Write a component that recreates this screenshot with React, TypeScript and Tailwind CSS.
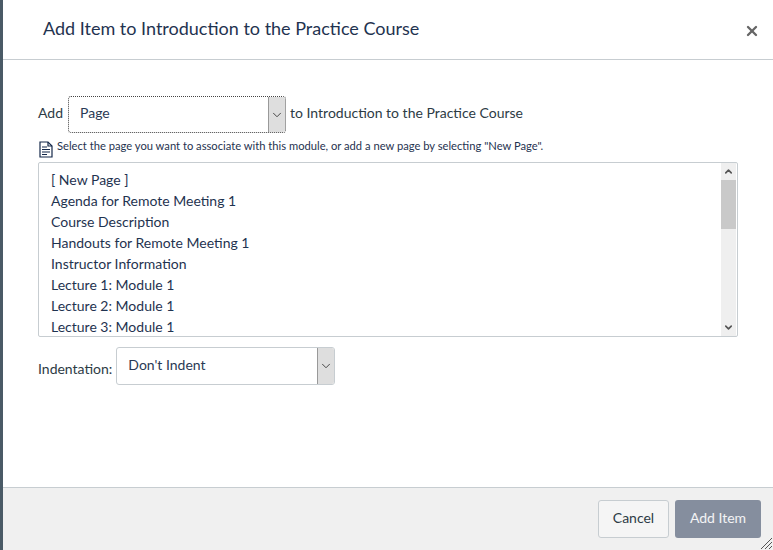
import { X, ChevronDown, ChevronUp } from "lucide-react";

const pages = [
    "[ New Page ]",
    "Agenda for Remote Meeting 1",
    "Course Description",
    "Handouts for Remote Meeting 1",
    "Instructor Information",
    "Lecture 1: Module 1",
    "Lecture 2: Module 1",
    "Lecture 3: Module 1",
];

function SelectBox({ label, className, focused }: { label: string; className: string; focused?: boolean }) {
    return (
        <div className={`flex bg-white rounded-[3px] ${focused ? "border border-dotted border-[#444]" : "border border-[#c7cdd1]"} ${className}`}>
            <div className="flex-1 flex items-center pl-[11px] pb-[4px] text-[14px] text-[#2a3a55]">{label}</div>
            <div className="w-[17px] flex items-center justify-center bg-[#dedede] border-l border-[#999] rounded-r-[2px]">
                <ChevronDown className="w-[14px] h-[14px] text-[#333]" strokeWidth={1.5} />
            </div>
        </div>
    );
}

export default function App() {
    return (
        <div className="w-[773px] h-[550px] flex overflow-hidden bg-white text-[#2d3b45] font-['Lato','Noto_Sans',sans-serif]">
            <div className="w-[3px] bg-[#4a5a66] shrink-0" />
            <div className="flex-1 flex flex-col min-w-0">
                {/* Header */}
                <div className="h-[60px] shrink-0 flex items-center justify-between pl-[40px] pr-[13px] border-b border-[#c7cdd1]">
                    <h1 className="text-[18px] text-[#1f3350] leading-none pb-[3px]">Add Item to Introduction to the Practice Course</h1>
                    <X className="w-[16px] h-[16px] text-[#666] mt-[3px]" strokeWidth={3.5} />
                </div>

                {/* Body */}
                <div className="flex-1 pl-[35px] pr-[35px] pt-[36px]">
                    <div className="flex items-center text-[14px] text-[#2d3b45] h-[37px]">
                        <span className="mr-[5px] pb-[5px]">Add</span>
                        <SelectBox label="Page" focused className="w-[218px] h-[37px]" />
                        <span className="ml-[4px] pb-[5px]">to Introduction to the Practice Course</span>
                    </div>

                    <div className="flex items-start h-[23px] mt-[6px] text-[11.2px] leading-[14px] text-[#1f3350]">
                        <svg className="w-[14px] h-[17px] mt-[2px] ml-[1px] mr-[4px] shrink-0" viewBox="0 0 14 17" fill="none" stroke="#14284a">
                            <path d="M1 1h8l4 4v11H1z" strokeWidth="1.2" />
                            <path d="M9 1v4h4" strokeWidth="1.2" />
                            <path d="M3 6h5M3 8.5h8M3 11h8M3 13.5h5" strokeWidth="1.1" />
                        </svg>
                        <span>Select the page you want to associate with this module, or add a new page by selecting "New Page".</span>
                    </div>

                    <div className="flex h-[175px] border border-[#c7cdd1] rounded-[2px] overflow-hidden">
                        <ul className="flex-1 pl-[12px] pt-[6px] text-[14px] leading-[21px] text-[#1f3350]">
                            {pages.map((p) => (
                                <li key={p} className="whitespace-nowrap">{p}</li>
                            ))}
                        </ul>
                        <div className="w-[15px] mr-[1px] flex flex-col bg-[#efefef]">
                            <div className="h-[17px] flex items-center justify-center">
                                <ChevronUp className="w-[11px] h-[11px] text-[#555]" strokeWidth={3.5} />
                            </div>
                            <div className="h-[49px] bg-[#c9c9c9]" />
                            <div className="flex-1" />
                            <div className="h-[17px] flex items-center justify-center">
                                <ChevronDown className="w-[11px] h-[11px] text-[#555]" strokeWidth={3.5} />
                            </div>
                        </div>
                    </div>

                    <div className="flex items-center mt-[10px] text-[14px]">
                        <span className="mr-[4px] mt-[4px]">Indentation:</span>
                        <SelectBox label="Don't Indent" className="w-[219px] h-[38px]" />
                    </div>
                </div>

                {/* Footer */}
                <div className="relative h-[63px] shrink-0 flex items-center justify-end gap-[6px] pr-[12px] bg-[#f0f0f0] border-t border-[#c7cdd1]">
                    <button className="w-[71px] h-[38px] pb-[3px] text-[14px] text-[#2d3b45] bg-[#f5f5f5] border border-[#c7cdd1] rounded-[3px]">Cancel</button>
                    <button className="w-[86px] h-[38px] pb-[3px] text-[14px] text-white/90 bg-[#858e9e] rounded-[3px]">Add Item</button>
                    <svg className="absolute right-0 bottom-0 w-[13px] h-[13px]" viewBox="0 0 13 13" stroke="#555" strokeWidth="1">
                        <path d="M1 12L12 1M5 12L12 5M9 12L12 9" />
                    </svg>
                </div>
            </div>
        </div>
    );
}
